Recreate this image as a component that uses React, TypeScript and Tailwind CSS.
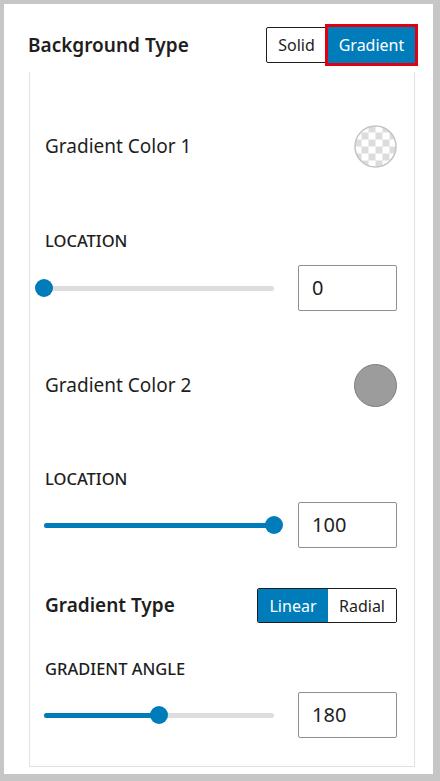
import React from "react";

const font = { fontFamily: '"Noto Sans", "Open Sans", sans-serif' };

function Checker() {
  return (
    <svg width="43" height="43" viewBox="0 0 43 43">
      <defs>
        <pattern id="chk" width="14" height="14" patternUnits="userSpaceOnUse" x="0.5" y="0.5">
          <rect width="14" height="14" fill="#ffffff" />
          <rect width="7" height="7" fill="#dcdcdc" />
          <rect x="7" y="7" width="7" height="7" fill="#dcdcdc" />
        </pattern>
      </defs>
      <circle cx="21.5" cy="21.5" r="20.5" fill="url(#chk)" stroke="#c4c4c4" strokeWidth="1.5" />
    </svg>
  );
}

function ColorRow({ label, swatch }: { label: string; swatch: React.ReactNode }) {
  return (
    <div className="flex h-[43px] items-center justify-between">
      <span className="text-[19px] text-[#1e1e1e]">{label}</span>
      {swatch}
    </div>
  );
}

function Label({ text }: { text: string }) {
  return <div className="text-[16.5px] leading-[20px] font-medium uppercase text-[#1e1e1e]">{text}</div>;
}

function RangeRow({ value, percent }: { value: string; percent: number }) {
  return (
    <div className="flex items-center">
      <div className="relative ml-[-1px] h-[18px] w-[230px]">
        <div className="absolute top-[7px] left-0 h-[5px] w-full rounded-full bg-[#dddddd]" />
        <div
          className="absolute top-[7px] left-0 h-[5px] rounded-full bg-[#007cba]"
          style={{ width: `${percent}%` }}
        />
        <div
          className="absolute top-0 h-[18px] w-[18px] -translate-x-1/2 rounded-full bg-[#007cba]"
          style={{ left: `${percent}%` }}
        />
      </div>
      <div className="ml-auto flex h-[46px] w-[99px] items-center rounded-[2px] border border-[#8f8f8f] pl-[13px] text-[20px] text-[#1e1e1e]">
        {value}
      </div>
    </div>
  );
}

export default function App() {
  return (
    <div
      className="h-[781px] w-[440px] border-t-4 border-r-[7px] border-b-[7px] border-l-4 border-[#c6c6c6] bg-white pl-[24px] pr-[18px]"
      style={font}
    >
      <div className="mt-[23px] flex h-[36px] items-center justify-between">
        <span className="text-[19px] font-semibold text-[#1e1e1e]">Background Type</span>
        <div className="flex h-[36px]">
          <div className="flex w-[61px] items-center justify-center rounded-l-[2px] border border-[#1e1e1e] text-[16px] text-[#1e1e1e]">
            Solid
          </div>
          <div className="ml-[1px] flex w-[87px] items-center justify-center bg-[#007cba] text-[16px] text-white outline-[3px] outline-[#e0000f] outline-solid">
            Gradient
          </div>
        </div>
      </div>

      <div className="mt-[9px] ml-[1px] border-x border-b border-[#e2e2e2] pt-[53px] pr-[17px] pb-[28px] pl-[15px]">
        <ColorRow label="Gradient Color 1" swatch={<Checker />} />
        <div className="mt-[63px]">
          <Label text="Location" />
        </div>
        <div className="mt-[14px]">
          <RangeRow value="0" percent={0} />
        </div>

        <div className="mt-[53px]">
          <ColorRow
            label="Gradient Color 2"
            swatch={<div className="h-[43px] w-[43px] rounded-full border border-[#7d7d7d] bg-[#9c9c9c]" />}
          />
        </div>
        <div className="mt-[62px]">
          <Label text="Location" />
        </div>
        <div className="mt-[13px]">
          <RangeRow value="100" percent={100} />
        </div>

        <div className="mt-[40px] flex h-[35px] items-center justify-between">
          <span className="text-[19px] font-semibold text-[#1e1e1e]">Gradient Type</span>
          <div className="flex h-[35px] overflow-hidden rounded-[2px] border border-[#1e1e1e]">
            <div className="flex w-[70px] items-center justify-center bg-[#007cba] text-[16px] text-white">Linear</div>
            <div className="flex w-[68px] items-center justify-center bg-white text-[16px] text-[#1e1e1e]">Radial</div>
          </div>
        </div>
        <div className="mt-[36px]">
          <Label text="Gradient Angle" />
        </div>
        <div className="mt-[13px]">
          <RangeRow value="180" percent={50} />
        </div>
      </div>
    </div>
  );
}
